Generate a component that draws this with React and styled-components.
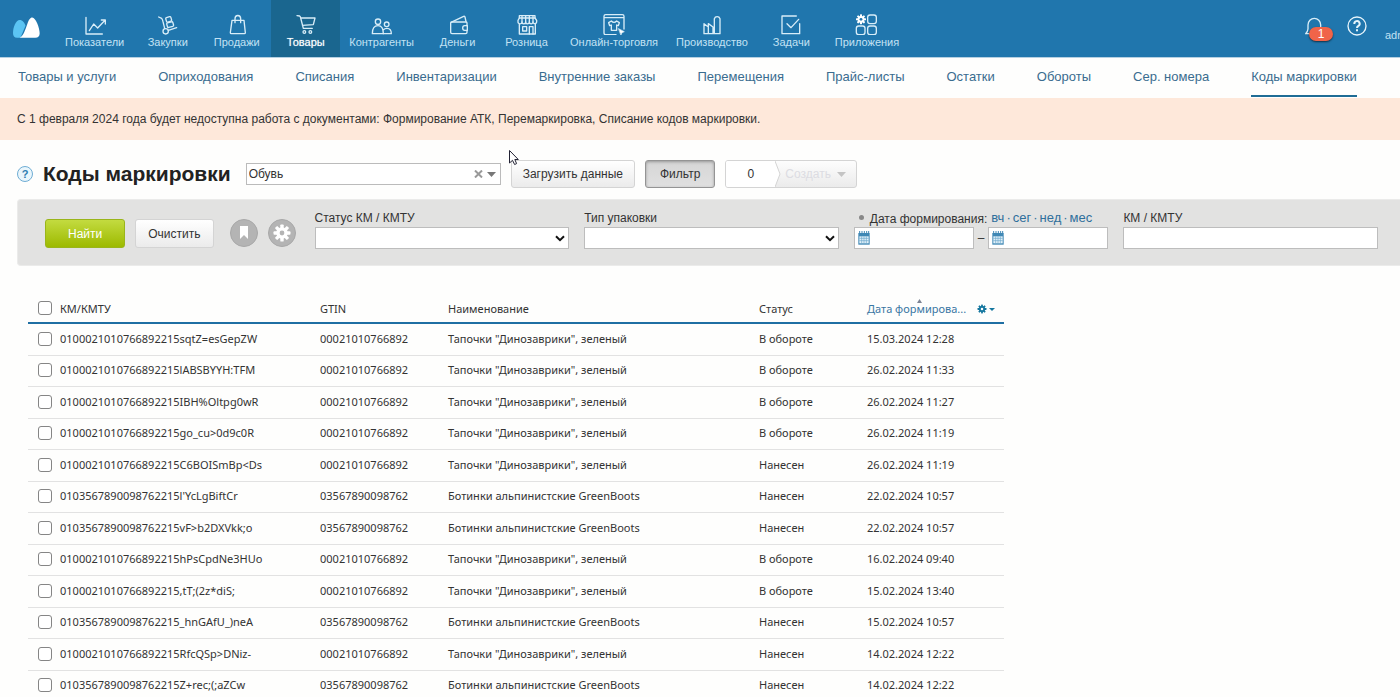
import React from "react";
import styled, { createGlobalStyle, css } from "styled-components";

const GlobalStyle = createGlobalStyle`
  * { box-sizing: border-box; }
  html, body { margin: 0; padding: 0; }
  body {
    background: #fefefd;
    color: #333;
    font-family: "Liberation Sans", Arial, sans-serif;
    font-size: 12px;
    overflow: hidden;
  }
  button, input, select { font: inherit; color: inherit; margin: 0; }
  a { text-decoration: none; }
`;

/* ---------- top bar ---------- */

const TopBar = styled.header`
  display: flex;
  height: 57px;
  background: #2076ad;
  overflow: hidden;
`;

const Logo = styled.a`
  flex: none;
  width: 56px;
  padding: 17px 0 0 13px;
  svg { display: block; }
`;

const MainNav = styled.nav`
  display: flex;
  flex: none;
`;

const NavItem = styled.a`
  display: flex;
  flex-direction: column;
  align-items: center;
  min-width: 69px;
  padding: 13px 9px 0;
  font-size: 11px;
  line-height: 14px;
  color: ${(p) => (p.$active ? "#fff" : "#c3e2f4")};
  background: ${(p) => (p.$active ? "#1a668f" : "transparent")};
  text-shadow: ${(p) => (p.$active ? "0 0 1px rgba(255, 255, 255, 0.6)" : "none")};
  svg {
    display: block;
    flex: none;
    fill: none;
    stroke: #d8edf8;
    stroke-width: 4;
    stroke-linejoin: round;
    stroke-linecap: round;
  }
`;

const Tools = styled.div`
  display: flex;
  flex: none;
  align-items: flex-start;
  margin-left: auto;
  padding-top: 15px;
  color: #c3e2f4;
`;

const ToolButton = styled.button`
  position: relative;
  flex: none;
  width: ${(p) => p.$width}px;
  height: 22px;
  padding: 0;
  border: 0;
  background: none;
  text-align: left;
  svg { display: block; }
`;

const Badge = styled.span`
  position: absolute;
  left: 4px;
  top: 12px;
  width: 24px;
  height: 14px;
  border-radius: 7px;
  background: #f06449;
  box-shadow: 0 1px 2px rgba(0, 0, 0, 0.6);
  color: #fff;
  font-size: 12px;
  line-height: 14px;
  text-align: center;
`;

const UserLink = styled.a`
  width: 15px;
  padding-top: 12px;
  font-size: 11px;
  line-height: 16px;
  color: #c3e2f4;
  white-space: nowrap;
`;

/* ---------- section tabs ---------- */

const Tabs = styled.nav`
  display: flex;
  gap: 42px;
  height: 41px;
  padding: 0 18px;
  border-top: 1px solid #b5d0e2;
  overflow: hidden;
`;

const Tab = styled.a`
  flex: none;
  height: 39px;
  font-size: 13px;
  line-height: 37px;
  color: #3a6c8f;
  border-bottom: 2px solid ${(p) => (p.$active ? "#1f6c95" : "transparent")};
`;

const Notice = styled.div`
  padding: 0 17px;
  background: #fee8da;
  line-height: 42px;
`;

/* ---------- page heading ---------- */

const Heading = styled.div`
  display: flex;
  align-items: center;
  height: 59px;
  padding: 9px 17px 0;
`;

const HelpButton = styled.button`
  width: 16px;
  height: 16px;
  padding: 0;
  border: 1px solid #6fadd4;
  border-radius: 50%;
  background: #eaf6fc;
  color: #2f7db0;
  font-size: 11px;
  font-weight: bold;
  line-height: 14px;
  text-align: center;
`;

const Title = styled.h1`
  margin: 0 15px 0 10px;
  color: #222;
  font-size: 21px;
  line-height: 28px;
  white-space: nowrap;
`;

const Combo = styled.div`
  display: flex;
  align-items: center;
  width: 255px;
  height: 22px;
  border: 1px solid #bbb;
  background: #fff;
  input {
    flex: 1;
    min-width: 0;
    padding: 0 2px;
    border: 0;
    outline: 0;
    background: none;
  }
`;

const ComboButton = styled.button`
  display: flex;
  padding: 0 4px 0 0;
  border: 0;
  background: none;
`;

const Actions = styled.div`
  display: flex;
  align-items: center;
  gap: 10px;
  margin-left: 10px;
`;

const Button = styled.button`
  flex: none;
  position: relative;
  height: ${(p) => p.$height || 28}px;
  padding: 0 ${(p) => p.$pad || 11}px;
  border: 1px solid #d4d4d4;
  border-radius: 3px;
  background: linear-gradient(#fff, #ebebeb);
  color: #333;
  line-height: 24px;
  white-space: nowrap;
  ${(p) =>
    p.$pressed &&
    css`
      border: 1px solid #949494;
      background: linear-gradient(#d6d6d6, #e0e0e0);
      box-shadow: inset 0 1px 3px rgba(0, 0, 0, 0.3);
    `}
  ${(p) =>
    p.$primary &&
    css`
      border-color: #9ab51a;
      background: linear-gradient(#c3db40, #9dba00);
      color: #fff;
    `}
`;

const Pointer = styled.svg`
  position: absolute;
  left: -4px;
  top: -12px;
`;

const Split = styled.div`
  display: flex;
  height: 28px;
  width: 132px;
  border: 1px solid #d4d4d4;
  border-radius: 3px;
  background: linear-gradient(#fdfdfd, #ebebeb);
  overflow: hidden;
  svg { display: block; flex: none; }
`;

const Count = styled.span`
  width: 49px;
  background: #fff;
  line-height: 26px;
  text-align: center;
`;

const SplitButton = styled.button`
  display: flex;
  flex: 1;
  align-items: center;
  gap: 6px;
  padding: 0 0 0 4px;
  border: 0;
  background: none;
  &:disabled { color: #dcdce2; }
`;

/* ---------- filter ---------- */

const FilterPanel = styled.form`
  display: flex;
  align-items: flex-start;
  height: 67px;
  margin-left: 17px;
  padding: 11px 22px 0 27px;
  border: 1px solid #ebebea;
  border-right: 0;
  border-radius: 4px 0 0 4px;
  background: #e2e2e1;
`;

const FilterActions = styled.div`
  display: flex;
  gap: 10px;
  padding-top: 8px;
  margin-right: 19px;
`;

const RoundButton = styled.button`
  display: flex;
  align-items: center;
  justify-content: center;
  width: 28px;
  height: 28px;
  margin-left: ${(p) => (p.$first ? 6 : 0)}px;
  padding: 0;
  border: 1px solid #a8a8a8;
  border-radius: 50%;
  background: #b4b4b4;
`;

const Fields = styled.div`
  display: grid;
  flex: 1;
  grid-template-columns: repeat(4, minmax(0, 1fr));
  gap: 15px;
`;

const Field = styled.div`
  min-width: 0;
`;

const Label = styled.label`
  display: block;
  height: 16px;
  line-height: 14px;
  white-space: nowrap;
`;

const DateLabel = styled.div`
  display: flex;
  height: 16px;
  padding-left: 5px;
  line-height: 16px;
  white-space: nowrap;
`;

const Dot = styled.span`
  width: 5px;
  height: 5px;
  margin: 4px 6px 0 0;
  border-radius: 50%;
  background: #888;
`;

const Shortcuts = styled.span`
  display: flex;
  gap: 2px;
  margin-left: 4px;
  font-size: 13px;
  line-height: 14px;
  color: #2f6f9c;
  a { color: inherit; }
`;

const control = css`
  width: 100%;
  height: 22px;
  border: 1px solid #bdbdbd;
  border-radius: 0;
  background: #fff;
`;

const TextInput = styled.input`
  ${control}
  display: block;
  padding: 0 4px;
`;

const SelectBox = styled.div`
  position: relative;
  select {
    ${control}
    display: block;
    padding: 0 20px 0 4px;
    appearance: none;
  }
  svg {
    position: absolute;
    right: 4px;
    top: 8px;
    pointer-events: none;
  }
`;

const DateRange = styled.div`
  display: flex;
  align-items: center;
`;

const Dash = styled.span`
  width: 14px;
  flex: none;
  text-align: center;
`;

const DateInput = styled.div`
  ${control}
  display: flex;
  flex: 1;
  align-items: center;
  min-width: 0;
  padding-left: 3px;
  svg { flex: none; }
  input {
    flex: 1;
    min-width: 0;
    padding: 0 4px;
    border: 0;
    outline: 0;
    background: none;
  }
`;

/* ---------- table ---------- */

const Table = styled.table`
  width: 976px;
  margin: 30px 0 0 28px;
  table-layout: fixed;
  border-collapse: separate;
  border-spacing: 0;
  color: #333;
  font-family: "Noto Sans", "Open Sans", sans-serif;
  font-size: 11px;
  line-height: 16px;
`;

const HeadCell = styled.th`
  height: 28px;
  padding: 0;
  border-bottom: 2px solid #1f6fa3;
  font-weight: normal;
  text-align: left;
  white-space: nowrap;
`;

const Row = styled.tr`
  height: 31px;
  &:nth-child(odd) { height: 32px; }
`;

const Cell = styled.td`
  padding: 0 0 2px;
  border-bottom: 1px solid #e2e2e2;
  white-space: nowrap;
`;

const Check = styled.input.attrs({ type: "checkbox" })`
  display: block;
  width: 14px;
  height: 14px;
  margin: 0 0 0 10px;
  border: 1px solid #858585;
  border-radius: 3px;
  background: #fff;
  appearance: none;
  ${HeadCell} & { margin-bottom: 2px; }
`;

const SortLink = styled.a`
  position: relative;
  display: inline-block;
  color: #3a76a3;
  svg {
    position: absolute;
    left: 50%;
    top: -2px;
  }
`;

const ColumnsButton = styled.button`
  display: flex;
  align-items: center;
  gap: 2px;
  padding: 0;
  border: 0;
  background: none;
`;

/* ---------- drawings ---------- */

function Gear({ cx, cy, r, fill, hole }) {
  const teeth = [0, 45, 90, 135];
  return (
    <g stroke="none">
      {teeth.map((a) => (
        <rect
          key={a}
          x={cx - r * 0.2}
          y={cy - r}
          width={r * 0.4}
          height={r * 2}
          rx={r * 0.1}
          fill={fill}
          transform={`rotate(${a} ${cx} ${cy})`}
        />
      ))}
      <circle cx={cx} cy={cy} r={r * 0.68} fill={fill} />
      <circle cx={cx} cy={cy} r={r * 0.28} fill={hole} />
    </g>
  );
}

const navDrawings = {
  stats: (
    <>
      <path d="M12 13V63H61" />
      <path d="M22 53L35 33L47 45L69 22M58 21H70V33" />
    </>
  ),
  purchases: (
    <>
      <path d="M11 12L20 16Q23 20 24 26L29 46M40 52L65 44" />
      <circle cx="32" cy="55" r="8" />
      <rect x="36" y="28" width="19" height="14" rx="3" transform="rotate(-16 45 35)" />
      <rect x="33" y="12" width="16" height="14" rx="3" transform="rotate(-16 41 19)" />
    </>
  ),
  sales: (
    <>
      <path d="M24 22H60L64 59Q64 62 61 62H22Q19 62 19 59Z" />
      <path d="M33 29V17A8 9 0 0 1 50 17V29" />
    </>
  ),
  goods: (
    <>
      <path d="M12 8L20 9Q22 10 23 15L31 46H58M23 15H66L61 35L28 37" />
      <circle cx="34" cy="57" r="4" />
      <circle cx="52" cy="57" r="4" />
    </>
  ),
  partners: (
    <>
      <circle cx="27" cy="26" r="8" />
      <path d="M10 62C10 45 18 38 27 38S43 45 43 62Z" />
      <circle cx="53" cy="34" r="7" />
      <path d="M43 62H67C67 51 61 46 54 46C49 46 46 47 43 50" />
    </>
  ),
  money: (
    <>
      <path d="M66 38V30Q66 27 63 27H21Q17 27 17 31V58Q17 62 21 62H62Q66 62 66 58V52" />
      <path d="M18 28L56 10Q59 9 60 12L63 26M67 38H59A6 7 0 0 0 59 52H67Z" />
    </>
  ),
  retail: (
    <>
      <path d="M16 8H63V15L68 22V26A5 5 0 0 1 57 27A5 5 0 0 1 46 27A5 5 0 0 1 35 27A5 5 0 0 1 24 27A5 5 0 0 1 12 26V22L16 15Z" />
      <path d="M16 15H63M24 10V27M35 10V27M46 10V27M57 10V27M16 34V63H64V34" />
      <path d="M26 41H38V54H26ZM46 63V41H57V63" />
    </>
  ),
  online: (
    <>
      <path d="M45 65H14Q9 65 9 60V10Q9 5 14 5H64Q69 5 69 10V48M9 14H69" />
      <path d="M31 24L23 29L26 38L31 36V52H47V36L52 38L55 29L47 24Q39 32 31 24Z" />
      <path d="M53 47L70 56L63 59L60 66Z" fill="#fff" strokeWidth="2" />
    </>
  ),
  production: (
    <path d="M46 62V17A9 9 0 0 1 63 17V62H15V32L28 42V32L42 42V62M28 42V62" />
  ),
  tasks: <path d="M55 9H12V62H65V32M27 32L39 44L62 19" />,
  apps: (
    <>
      <Gear cx={21} cy={19} r={15} fill="#fff" hole="#2076ad" />
      <rect x="41" y="6" width="26" height="26" rx="7" />
      <rect x="7" y="39" width="26" height="26" rx="7" />
      <rect x="41" y="39" width="26" height="26" rx="7" />
    </>
  ),
};

const Triangle = ({ width, height, fill, up }) => (
  <svg width={width} height={height} viewBox="0 0 10 6" preserveAspectRatio="none">
    <path d={up ? "M0 6H10L5 0Z" : "M0 0H10L5 6Z"} fill={fill} />
  </svg>
);

const SelectArrow = () => (
  <svg width="10" height="7" viewBox="0 0 10 7">
    <path d="M1 1.2L5 5.2L9 1.2" fill="none" stroke="#111" strokeWidth="2" />
  </svg>
);

const Calendar = () => (
  <svg width="12" height="14" viewBox="0 0 36 42">
    <rect x="1" y="6" width="34" height="35" fill="#4088b5" />
    <path d="M5 0V8M12 0V8M19 0V8M26 0V8M32 0V8" stroke="#4088b5" strokeWidth="3" />
    <rect x="4" y="16" width="28" height="21" fill="#e4f2fa" />
    <path d="M4 22H32M4 29H32M11 16V37M18 16V37M25 16V37" stroke="#6aa8cc" strokeWidth="2" />
  </svg>
);

/* ---------- data ---------- */

const navItems = [
  ["stats", "Показатели"],
  ["purchases", "Закупки"],
  ["sales", "Продажи"],
  ["goods", "Товары"],
  ["partners", "Контрагенты"],
  ["money", "Деньги"],
  ["retail", "Розница"],
  ["online", "Онлайн-торговля"],
  ["production", "Производство"],
  ["tasks", "Задачи"],
  ["apps", "Приложения"],
];

const tabs = [
  "Товары и услуги",
  "Оприходования",
  "Списания",
  "Инвентаризации",
  "Внутренние заказы",
  "Перемещения",
  "Прайс-листы",
  "Остатки",
  "Обороты",
  "Сер. номера",
  "Коды маркировки",
];

const slippers = ["00021010766892", 'Тапочки "Динозаврики", зеленый'];
const boots = ["03567890098762", "Ботинки альпинистские GreenBoots"];

const rows = [
  ["0100021010766892215sqtZ=esGepZW", ...slippers, "В обороте", "15.03.2024 12:28"],
  ["0100021010766892215lABSBYYH:TFM", ...slippers, "В обороте", "26.02.2024 11:33"],
  ["0100021010766892215IBH%Oltpg0wR", ...slippers, "В обороте", "26.02.2024 11:27"],
  ["0100021010766892215go_cu>0d9c0R", ...slippers, "В обороте", "26.02.2024 11:19"],
  ["0100021010766892215C6BOISmBp<Ds", ...slippers, "Нанесен", "26.02.2024 11:19"],
  ["0103567890098762215l'YcLgBiftCr", ...boots, "Нанесен", "22.02.2024 10:57"],
  ["0103567890098762215vF>b2DXVkk;o", ...boots, "Нанесен", "22.02.2024 10:57"],
  ["0100021010766892215hPsCpdNe3HUo", ...slippers, "В обороте", "16.02.2024 09:40"],
  ["0100021010766892215,tT;(2z*diS;", ...slippers, "В обороте", "15.02.2024 13:40"],
  ["0103567890098762215_hnGAfU_)neA", ...boots, "Нанесен", "15.02.2024 10:57"],
  ["0100021010766892215RfcQSp>DNiz-", ...slippers, "Нанесен", "14.02.2024 12:22"],
  ["0103567890098762215Z+rec;(;aZCw", ...boots, "Нанесен", "14.02.2024 12:22"],
];

export default function App() {
  return (
    <>
      <GlobalStyle />
      <TopBar>
        <Logo href="#" aria-label="Главная">
          <svg width="27" height="21" viewBox="0 0 80 62">
            <path d="M0 47C0 31 8 9 20 9C28 9 34 17 37 26L22 61H12C4 61 0 56 0 47Z" fill="#5bc4f3" />
            <path d="M20 61C32 55 36 37 42 22C47 7 51 1 57 1C67 1 79 31 79 48C79 57 75 61 66 61Z" fill="#fff" />
          </svg>
        </Logo>
        <MainNav>
          {navItems.map(([icon, text]) => (
            <NavItem key={icon} href="#" $active={icon === "goods"}>
              <svg width="26" height="22" viewBox="0 0 78 66">
                {navDrawings[icon]}
              </svg>
              {text}
            </NavItem>
          ))}
        </MainNav>
        <Tools>
          <ToolButton $width={42} aria-label="Уведомления">
            <svg width="18" height="18" viewBox="0 0 54 54" fill="none" stroke="#d8edf8" strokeWidth="4">
              <path d="M22 50H2Q8 44 9 36V24A19 20 0 0 1 47 24V36" />
            </svg>
            <Badge>1</Badge>
          </ToolButton>
          <ToolButton $width={38} aria-label="Помощь">
            <svg width="20" height="22" viewBox="0 0 60 66" fill="none" stroke="#e6f4fb">
              <circle cx="30" cy="33" r="27" strokeWidth="4" />
              <path d="M22 27A8 8 0 1 1 34 33Q30 35 30 39" strokeWidth="6" />
              <path d="M30 43V49" strokeWidth="6" />
            </svg>
          </ToolButton>
          <UserLink href="#">admin</UserLink>
        </Tools>
      </TopBar>

      <Tabs>
        {tabs.map((t) => (
          <Tab key={t} href="#" $active={t === "Коды маркировки"}>
            {t}
          </Tab>
        ))}
      </Tabs>

      <Notice>
        С 1 февраля 2024 года будет недоступна работа с документами: Формирование АТК,
        Перемаркировка, Списание кодов маркировки.
      </Notice>

      <main>
        <Heading>
          <HelpButton aria-label="Справка">?</HelpButton>
          <Title>Коды маркировки</Title>
          <Combo>
            <input aria-label="Тип продукции" defaultValue="Обувь" />
            <ComboButton aria-label="Сбросить">
              <svg width="9" height="8" viewBox="0 0 9 8">
                <path d="M1 0.5L8 7.5M8 0.5L1 7.5" stroke="#999" strokeWidth="2" />
              </svg>
            </ComboButton>
            <ComboButton aria-label="Показать список">
              <Triangle width={9} height={5} fill="#777" />
            </ComboButton>
          </Combo>
          <Actions>
            <Button>
              Загрузить данные
              <Pointer width="12" height="17" viewBox="0 0 12 17" aria-hidden="true">
                <path
                  d="M1.5 1.5V14L4.5 11.3L6.6 15.5L8.6 14.6L6.8 10.5H10.3Z"
                  fill="#fff"
                  stroke="#223"
                />
              </Pointer>
            </Button>
            <Button $pressed $pad={14}>Фильтр</Button>
            <Split>
              <Count>0</Count>
              <svg width="6" height="26" viewBox="0 0 6 26">
                <path d="M0 0L5 13L0 26Z" fill="#fff" />
                <path d="M0 0L5 13L0 26" fill="none" stroke="#d4d4d4" />
              </svg>
              <SplitButton disabled>
                Создать
                <Triangle width={9} height={5} fill="#c4c4c4" />
              </SplitButton>
            </Split>
          </Actions>
        </Heading>

        <FilterPanel onSubmit={(e) => e.preventDefault()}>
          <FilterActions>
            <Button $primary $height={29} $pad={22}>Найти</Button>
            <Button type="button" $height={29} $pad={12}>Очистить</Button>
            <RoundButton type="button" $first aria-label="Закладки">
              <svg width="10" height="14" viewBox="0 0 10 14">
                <path d="M1 0H9V13L5 9L1 13Z" fill="#fff" />
              </svg>
            </RoundButton>
            <RoundButton type="button" aria-label="Настройки">
              <svg width="18" height="18" viewBox="0 0 18 18">
                <Gear cx={9} cy={9} r={8.5} fill="#fff" hole="#b4b4b4" />
              </svg>
            </RoundButton>
          </FilterActions>
          <Fields>
            <Field>
              <Label htmlFor="status">Статус КМ / КМТУ</Label>
              <SelectBox>
                <select id="status"><option></option></select>
                <SelectArrow />
              </SelectBox>
            </Field>
            <Field>
              <Label htmlFor="pack">Тип упаковки</Label>
              <SelectBox>
                <select id="pack"><option></option></select>
                <SelectArrow />
              </SelectBox>
            </Field>
            <Field>
              <DateLabel>
                <Dot />
                <label htmlFor="from">Дата формирования:</label>
                <Shortcuts>
                  <a href="#">вч</a>·<a href="#">сег</a>·<a href="#">нед</a>·<a href="#">мес</a>
                </Shortcuts>
              </DateLabel>
              <DateRange>
                <DateInput>
                  <Calendar />
                  <input id="from" />
                </DateInput>
                <Dash>–</Dash>
                <DateInput>
                  <Calendar />
                  <input aria-label="Дата формирования, до" />
                </DateInput>
              </DateRange>
            </Field>
            <Field>
              <Label htmlFor="code">КМ / КМТУ</Label>
              <TextInput id="code" />
            </Field>
          </Fields>
        </FilterPanel>

        <Table>
          <colgroup>
            <col width="32" />
            <col width="260" />
            <col width="128" />
            <col width="311" />
            <col width="108" />
            <col width="110" />
            <col width="27" />
          </colgroup>
          <thead>
            <tr>
              <HeadCell><Check aria-label="Выбрать все" /></HeadCell>
              <HeadCell>КМ/КМТУ</HeadCell>
              <HeadCell>GTIN</HeadCell>
              <HeadCell>Наименование</HeadCell>
              <HeadCell>Статус</HeadCell>
              <HeadCell>
                <SortLink href="#">
                  Дата формирова...
                  <Triangle width={5} height={4} fill="#7d8494" up />
                </SortLink>
              </HeadCell>
              <HeadCell>
                <ColumnsButton aria-label="Настроить столбцы">
                  <svg width="10" height="10" viewBox="0 0 10 10">
                    <Gear cx={5} cy={5} r={4.5} fill="#15779f" hole="#fff" />
                  </svg>
                  <Triangle width={6} height={3} fill="#15779f" />
                </ColumnsButton>
              </HeadCell>
            </tr>
          </thead>
          <tbody>
            {rows.map((row) => (
              <Row key={row[0]}>
                <Cell><Check aria-label={row[0]} /></Cell>
                {row.map((value, i) => (
                  <Cell key={i} colSpan={i === row.length - 1 ? 2 : 1}>{value}</Cell>
                ))}
              </Row>
            ))}
          </tbody>
        </Table>
      </main>
    </>
  );
}
